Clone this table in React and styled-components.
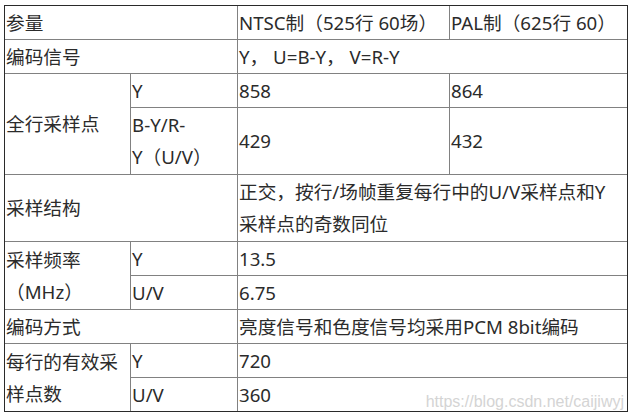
import React from "react";
import styled, { createGlobalStyle } from "styled-components";

const GlobalStyle = createGlobalStyle`
  html, body {
    margin: 0;
    padding: 0;
    background: #ffffff;
  }
`;

const Page = styled.div`
  padding: 5px 4px 6px 4px;
`;

const Frame = styled.div`
  position: relative;
  box-sizing: border-box;
  width: 624px;
  border: 1px solid #2a2a2a;
  background: #818181;
  display: grid;
  grid-template-columns: 125px 106px 211px 177px;
  grid-template-rows: 33px 33px 33px 66px 66px 33px 33px 33px 33px 33px;
  gap: 1px;
`;

const Cell = styled.div`
  grid-column: ${(props) => props.$col};
  grid-row: ${(props) => props.$row};
  background: #ffffff;
  display: flex;
  align-items: center;
  padding: 0 1px;
  color: #2b2b2b;
  font-family: "Noto Sans", "Noto Sans CJK SC", sans-serif;
  font-size: 18.67px;
  line-height: 32px;
  white-space: ${(props) => (props.$nowrap ? "nowrap" : "normal")};
`;

const Watermark = styled.div`
  position: absolute;
  right: 3px;
  bottom: 0;
  font-family: "Liberation Sans", Arial, sans-serif;
  font-size: 16px;
  line-height: 18px;
  color: #d4d4d4;
  pointer-events: none;
`;

const rows = [
  { col: "1 / 3", row: "1", text: "参量" },
  { col: "3", row: "1", text: "NTSC制（525行 60场）", nowrap: true },
  { col: "4", row: "1", text: "PAL制（625行 60）", nowrap: true },
  { col: "1 / 3", row: "2", text: "编码信号" },
  { col: "3 / 5", row: "2", text: "Y， U=B-Y， V=R-Y" },
  { col: "1", row: "3 / 5", text: "全行采样点" },
  { col: "2", row: "3", text: "Y" },
  { col: "3", row: "3", text: "858" },
  { col: "4", row: "3", text: "864" },
  {
    col: "2",
    row: "4",
    text: (
      <span>
        B-Y/R-
        <br />
        Y（U/V）
      </span>
    ),
  },
  { col: "3", row: "4", text: "429" },
  { col: "4", row: "4", text: "432" },
  { col: "1 / 3", row: "5", text: "采样结构" },
  {
    col: "3 / 5",
    row: "5",
    text: (
      <span>
        正交，按行/场帧重复每行中的U/V采样点和Y
        <br />
        采样点的奇数同位
      </span>
    ),
  },
  { col: "1", row: "6 / 8", text: "采样频率（MHz）" },
  { col: "2", row: "6", text: "Y" },
  { col: "3 / 5", row: "6", text: "13.5" },
  { col: "2", row: "7", text: "U/V" },
  { col: "3 / 5", row: "7", text: "6.75" },
  { col: "1 / 3", row: "8", text: "编码方式" },
  { col: "3 / 5", row: "8", text: "亮度信号和色度信号均采用PCM 8bit编码" },
  { col: "1", row: "9 / 11", text: "每行的有效采样点数" },
  { col: "2", row: "9", text: "Y" },
  { col: "3 / 5", row: "9", text: "720" },
  { col: "2", row: "10", text: "U/V" },
  { col: "3 / 5", row: "10", text: "360" },
];

const App = () => {
  return (
    <Page>
      <GlobalStyle />
      <Frame>
        {rows.map((cell, i) => (
          <Cell key={i} $col={cell.col} $row={cell.row} $nowrap={cell.nowrap}>
            {cell.text}
          </Cell>
        ))}
        <Watermark>https://blog.csdn.net/caijiwyj</Watermark>
      </Frame>
    </Page>
  );
};

export default App;
